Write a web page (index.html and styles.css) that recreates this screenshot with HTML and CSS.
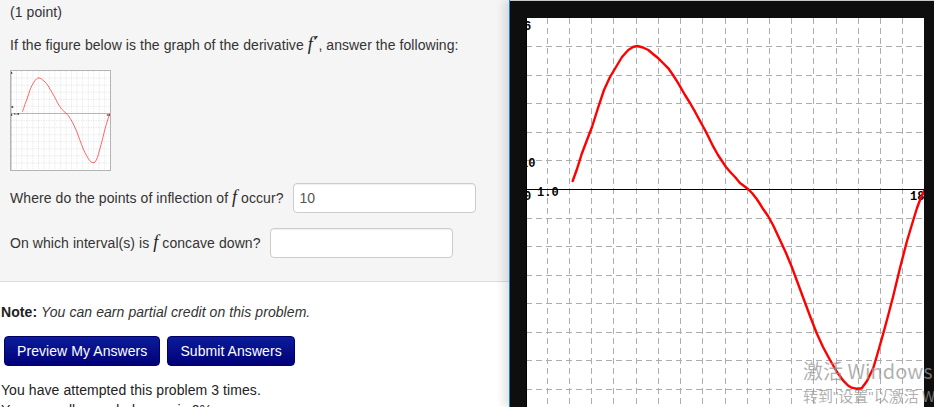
FILE: index.html
```html
<!DOCTYPE html>
<html>
<head>
<meta charset="utf-8">
<link rel="stylesheet" href="styles.css">
</head>
<body>
<div class="page">
  <div class="problem">
    <p class="points">(1 point)</p>
    <p class="intro">If the figure below is the graph of the derivative <span class="mv">f</span><span class="prime">′</span>, answer the following:</p>
    <svg class="thumb" viewBox="16 18 398 400" preserveAspectRatio="none">
      <use href="#plot"/>
    </svg>
    <div class="qrow q1">
      <span>Where do the points of inflection of <span class="mv">f</span> occur?</span>
      <input class="ans" type="text" value="10">
    </div>
    <div class="qrow q2">
      <span>On which interval(s) is <span class="mv">f</span> concave down?</span>
      <input class="ans" type="text" value="">
    </div>
  </div>
  <p class="note"><b>Note:</b> <i>You can earn partial credit on this problem.</i></p>
  <div class="buttons">
    <button class="btn">Preview My Answers</button>
    <button class="btn">Submit Answers</button>
  </div>
  <p class="attempts">You have attempted this problem 3 times.<br>Your overall recorded score is 0%.</p>
</div>

<div class="viewer">
  <svg class="bigplot" width="424" height="407" viewBox="0 0 424 407">
    <g id="plot">
      <rect x="16" y="18" width="398" height="400" fill="#fff"/>
      <path class="grid" d="M37.5 18V418M59.5 18V418M81.5 18V418M103.5 18V418M126.5 18V418M148.5 18V418M170.5 18V418M192.5 18V418M215.5 18V418M237.5 18V418M259.5 18V418M281.5 18V418M303.5 18V418M326.5 18V418M348.5 18V418M370.5 18V418M392.5 18V418"/>
      <path class="grid" d="M16 46.5H414M16 75.5H414M16 103.5H414M16 132.5H414M16 160.5H414M16 218.5H414M16 246.5H414M16 275.5H414M16 303.5H414M16 332.5H414M16 360.5H414M16 389.5H414"/>
      <path d="M16 189.5H414" stroke="#000" stroke-width="1.2"/>
      <path d="M16.5 18V418" stroke="#000" stroke-width="1"/>
      <text class="lbl" x="14" y="30">6</text>
      <text class="lbl" x="11" y="167">10</text>
      <text class="lbl" x="14" y="200">0</text>
      <text class="lbl" x="27" y="196">1.0</text>
      <text class="lbl" x="400" y="200">18</text>
      <polyline class="curve" points="62.7,181 67,169 71.7,154 77,140 82,127 88,108 94,90 100,77 106,67 112,57 118.3,50 123,47 127.3,46 133,47.5 138.3,50 143,54 148.3,58.3 153,63 158.3,68.3 163,75 168.3,83.3 175,95 180,103 185,111.7 190,121 195,130 199,138 203.3,146.7 208,155 212,161 216,167 220,171.7 225,177 230,183 234,186 238.3,189.3 242,193 246.7,199 250,204 253.3,209.3 258,216 263,225 270,240 276,253 281.7,266.7 287,281 293.3,298 300,316 306.7,333.3 313,347 320,360 327,372 333.3,380.7 338,385.5 341.7,387.7 346,388.7 351.7,388.2 357,381 363.3,368 368,352 373.3,333.3 378,316 383,297 390,268 397,241 403.3,220 407,208 410,200 414,191"/>
    </g>
    <rect x="0" y="0" width="16" height="407" fill="#0e0e0e"/>
    <rect x="0" y="0" width="424" height="18" fill="#0e0e0e"/>
    <rect x="414" y="0" width="10" height="407" fill="#0e0e0e"/>
    <rect x="0" y="0" width="424" height="1" fill="#c8c8c8"/>
  </svg>
</div>

<div class="watermark">
  <div class="wm1">激活 Windows</div>
  <div class="wm2">转到<span class="q">"</span>设置<span class="q">"</span>以激活 Windows。</div>
</div>
</body>
</html>
```

FILE: styles.css
```css
html, body {
  margin: 0;
  padding: 0;
  background: #fff;
  overflow: hidden;
}

body {
  width: 934px;
  height: 407px;
  font-family: "Liberation Sans", Arial, sans-serif;
  font-size: 14px;
  line-height: 20px;
  letter-spacing: 0.07px;
  color: #333;
  position: relative;
}

.page {
  width: 509px;
}

.problem {
  background: #f5f5f5;
  border-bottom: 1px solid #dcdcdc;
  padding: 2px 10px 23px 10px;
}

.problem p {
  margin: 0;
}

.problem .intro {
  margin-top: 13px;
}

.mv {
  font-family: "Liberation Serif", "DejaVu Serif", serif;
  font-style: italic;
  font-size: 18px;
  line-height: 0;
  color: #222;
}

.prime {
  font-family: "DejaVu Sans", sans-serif;
  font-weight: bold;
  font-size: 17px;
  line-height: 0;
  position: relative;
  top: -1px;
  margin-left: 1px;
  color: #222;
}

.thumb {
  display: block;
  width: 99px;
  height: 99px;
  margin-top: 15px;
  border: 1px solid #b4b4b4;
  background: #fff;
}

.qrow {
  display: flex;
  align-items: center;
  gap: 9px;
}

.q1 {
  margin-top: 12px;
}

.q2 {
  margin-top: 15px;
}

.ans {
  box-sizing: border-box;
  width: 183px;
  height: 30px;
  border: 1px solid #cccccc;
  border-radius: 4px;
  background: #fff;
  padding: 4px 6px;
  font-family: "Liberation Sans", Arial, sans-serif;
  font-size: 14px;
  color: #555;
  box-shadow: inset 0 1px 1px rgba(0, 0, 0, 0.06);
}

.note {
  margin: 20px 0 0 1px;
}

.note b {
  color: #222;
}

.buttons {
  display: flex;
  gap: 7px;
  margin: 14px 0 0 4px;
}

.btn {
  box-sizing: border-box;
  height: 30px;
  padding: 0 12px;
  border: 1px solid #000066;
  border-radius: 4px;
  background: linear-gradient(#0c1c9a, #000078);
  color: #fff;
  font-family: "Liberation Sans", Arial, sans-serif;
  font-size: 14px;
  letter-spacing: 0.07px;
  line-height: 28px;
}

.attempts {
  margin: 14px 0 0 1px;
  color: #222;
}

.viewer {
  position: absolute;
  left: 509px;
  top: 0;
  width: 424px;
  height: 407px;
  border-left: 1px solid #1a7fd6;
  background: #0e0e0e;
  box-shadow: -5px 0 9px rgba(0, 0, 0, 0.12);
}

.bigplot {
  display: block;
}

.grid {
  fill: none;
  stroke: #adadad;
  stroke-width: 1;
  stroke-dasharray: 6 4;
}

.curve {
  fill: none;
  stroke: #ff0000;
  stroke-width: 2.4;
  stroke-linejoin: round;
  stroke-linecap: round;
}

.lbl {
  font-family: "Liberation Mono", "DejaVu Sans Mono", monospace;
  font-weight: bold;
  font-size: 12px;
  letter-spacing: 0;
  fill: #000;
}

.watermark {
  position: absolute;
  left: 803px;
  top: 356px;
  color: rgba(150, 150, 150, 0.75);
  font-family: "Noto Sans CJK SC", "Noto Sans", sans-serif;
  letter-spacing: 0;
  white-space: nowrap;
  pointer-events: none;
}

.wm1 {
  font-size: 20px;
  line-height: 30px;
}

.wm2 {
  font-size: 15px;
  line-height: 20px;
}

.wm2 .q {
  font-family: "Liberation Sans", sans-serif;
}
```
